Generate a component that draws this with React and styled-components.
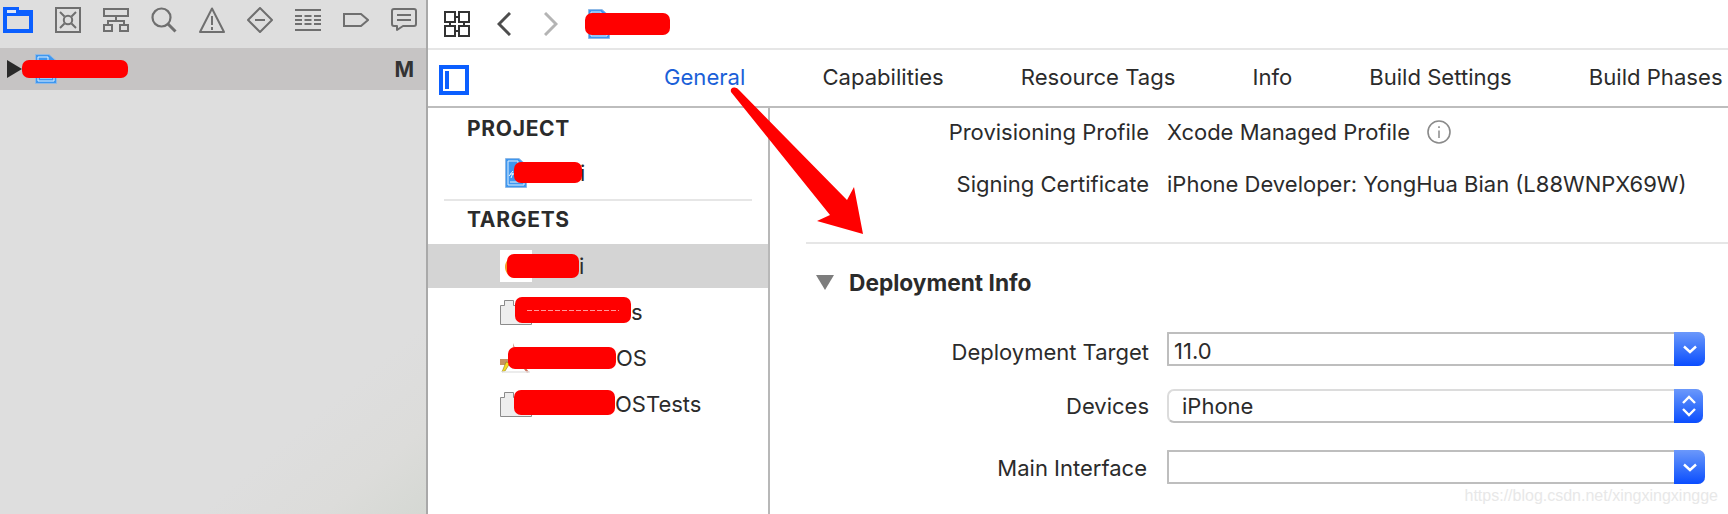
import React from 'react'
import styled, { createGlobalStyle } from 'styled-components'

const Global = createGlobalStyle`
  html, body { margin: 0; padding: 0; background: #fff; }
  body { font-family: Inter, "Liberation Sans", sans-serif; color: #2b2b2b; }
`

const Page = styled.div`
  position: relative;
  display: flex;
  width: 1728px;
  height: 514px;
  overflow: hidden;
  background: #fff;
`

const Navigator = styled.aside`
  flex: none;
  width: 426px;
  border-right: 2px solid #a9a9a9;
  background: linear-gradient(140deg, #dedede 78%, #dcdcda 90%, #d5d8d3 100%);
`

const NavTools = styled.div`
  display: flex;
  align-items: center;
  gap: 22px;
  height: 48px;
  padding: 0 0 0 3px;
  box-sizing: border-box;
  svg { flex: none; margin-top: -8px; }
`

const ProjectRow = styled.div`
  display: flex;
  align-items: center;
  height: 42px;
  padding: 0 12px 0 7px;
  background: #c6c4c4;
`

const Arrow = styled.span`
  width: 0;
  height: 0;
  border-style: solid;
  border-width: 9px 0 9px 15px;
  border-color: transparent transparent transparent #2a2a2a;
`

const ModBadge = styled.span`
  margin-left: auto;
  font-size: 21px;
  font-weight: 700;
  color: #333;
`

const Redact = styled.span`
  flex: none;
  display: block;
  position: relative;
  z-index: 1;
  width: ${p => p.$w}px;
  height: ${p => p.$h}px;
  margin-left: ${p => p.$ml}px;
  margin-top: ${p => p.$mt || 0}px;
  background: #ff0000;
  border-radius: 7px;
  ${p => p.$dash && `
    &::after {
      content: '';
      position: absolute;
      left: 12px;
      top: ${p.$dash}px;
      width: ${p.$w - 24}px;
      height: 1px;
      background: repeating-linear-gradient(90deg, #ff9c9c 0 5px, #ff0000 5px 7px);
    }
  `}
`

const Editor = styled.main`
  flex: 1;
  min-width: 0;
  display: flex;
  flex-direction: column;
`

const TopBar = styled.div`
  display: flex;
  align-items: center;
  height: 48px;
  padding-left: 16px;
  border-bottom: 2px solid #e6e6e6;
`

const NavButton = styled.span`
  display: flex;
  margin-left: ${p => p.$ml}px;
`

const TabBar = styled.div`
  display: flex;
  align-items: center;
  height: 56px;
  padding-left: 11px;
  border-bottom: 2px solid #bdbdbd;
`

const PaneToggle = styled.span`
  flex: none;
  box-sizing: border-box;
  width: 30px;
  height: 30px;
  padding: 2px 0 2px 2px;
  margin-top: 4px;
  border: 4px solid #0b5fff;
  &::before {
    content: '';
    display: block;
    width: 4px;
    height: 100%;
    background: #0b5fff;
  }
`

const Tabs = styled.nav`
  display: flex;
  gap: 77px;
  margin-left: 195px;
  margin-top: -2px;
`

const Tab = styled.span`
  font-size: 22.1px;
  line-height: 30px;
  white-space: nowrap;
  color: ${p => (p.$active ? '#1a5fd8' : '#2b2b2b')};
`

const Body = styled.div`
  flex: 1;
  display: flex;
  min-height: 0;
`

const Targets = styled.div`
  flex: none;
  width: 340px;
  border-right: 2px solid #b8b8b8;
  display: flex;
  flex-direction: column;
`

const GroupTitle = styled.div`
  height: 30px;
  margin-top: ${p => p.$mt}px;
  padding-left: 39px;
  font-size: 21px;
  line-height: 30px;
  font-weight: 700;
  letter-spacing: 0.7px;
  color: #2b2b2b;
`

const TargetRow = styled.div`
  display: flex;
  align-items: center;
  height: 44px;
  margin-top: ${p => p.$mt || 0}px;
  padding-left: 72px;
  font-size: 22px;
  background: ${p => (p.$selected ? '#d4d4d4' : 'transparent')};
`

const Sep = styled.div`
  height: 2px;
  margin: 4px 16px 0;
  background: #e6e6e6;
`

const IconBox = styled.span`
  flex: none;
  display: flex;
  align-items: center;
  width: 32px;
  height: 32px;
  background: ${p => (p.$white ? '#fff' : 'transparent')};
`

const Suffix = styled.span`
  margin-left: ${p => p.$ml || 0}px;
  white-space: nowrap;
`

const Settings = styled.section`
  flex: 1;
  min-width: 0;
  display: flex;
  flex-direction: column;
`

const Field = styled.div`
  display: flex;
  align-items: center;
  gap: 18px;
  height: ${p => p.$h || 34}px;
  margin-top: ${p => p.$mt || 0}px;
  font-size: 22px;
`

const Label = styled.span`
  flex: none;
  width: ${p => p.$w || 379}px;
  margin-right: ${p => (p.$w ? 379 - p.$w : 0)}px;
  padding-top: ${p => p.$drop || 0}px;
  text-align: right;
  white-space: nowrap;
`

const Value = styled.span`
  white-space: nowrap;
`

const InfoDot = styled.span`
  display: flex;
  margin-left: -1px;
`

const Divider = styled.div`
  height: 2px;
  margin: 34px 0 0 36px;
  background: #e6e6e6;
`

const SectionHead = styled.div`
  display: flex;
  align-items: center;
  height: 30px;
  margin-top: 23px;
  padding-left: 46px;
  font-size: 22.7px;
  font-weight: 700;
  color: #2b2b2b;
  &::before {
    content: '';
    margin-right: 15px;
    border-style: solid;
    border-width: 15px 9px 0 9px;
    border-color: #7d7d7d transparent transparent transparent;
  }
`

const Select = styled.div`
  display: flex;
  box-sizing: border-box;
  align-items: stretch;
  width: ${p => p.$w}px;
  height: 34px;
  background: #fff;
  border: 2px solid ${p => (p.$soft ? '#dcdcdc' : '#bebebe')};
  border-right: none;
  border-bottom-color: #bebebe;
  border-radius: ${p => (p.$soft ? '7px' : '1px')} 7px 7px ${p => (p.$soft ? '7px' : '1px')};
`

const SelectText = styled.span`
  flex: 1;
  padding-left: ${p => p.$pl}px;
  font-size: 22px;
  line-height: ${p => p.$lh || 30}px;
`

const SelectButton = styled.span`
  flex: none;
  display: flex;
  align-items: center;
  justify-content: center;
  width: ${p => p.$w}px;
  margin: -2px 0;
  border-radius: 0 7px 7px 0;
  background: linear-gradient(180deg, #6b98fb 0%, #3a74fb 50%, #0b4dff 100%);
`

const Watermark = styled.span`
  position: absolute;
  right: 10px;
  bottom: 9px;
  font-family: "Liberation Sans", sans-serif;
  font-size: 16px;
  color: #e8e8e8;
  white-space: nowrap;
`

const Overlay = styled.svg`
  position: absolute;
  left: 0;
  top: 0;
  pointer-events: none;
`

const gray = '#6f6f6f'

const FolderIcon = () => (
  <svg width="30" height="26" viewBox="0 0 30 26" fill="none">
    <path d="M0 0H16V3H30V26H0Z" fill="#0b5fff" />
    <path d="M4 3H13V6H4Z" fill="#dfe6f5" />
    <path d="M4 9H26V22H4Z" fill="#dedede" />
  </svg>
)

const SymbolIcon = () => (
  <svg width="26" height="26" viewBox="0 0 26 26" fill="none" stroke={gray}>
    <rect x="1" y="1" width="24" height="24" strokeWidth="2" />
    <circle cx="13" cy="13" r="4.2" strokeWidth="2" />
    <path d="M5 5L9.5 9.5M21 5L16.5 9.5M5 21L9.5 16.5M21 21L16.5 16.5" strokeWidth="2" />
  </svg>
)

const HierarchyIcon = () => (
  <svg width="26" height="24" viewBox="0 0 26 24" fill="none" stroke={gray} strokeWidth="2">
    <rect x="1" y="1" width="24" height="7" />
    <path d="M13 8V13M5 17V13H21V17" />
    <rect x="1" y="17" width="8" height="6" />
    <rect x="17" y="17" width="8" height="6" />
  </svg>
)

const SearchIcon = () => (
  <svg width="26" height="26" viewBox="0 0 26 26" fill="none" stroke={gray}>
    <circle cx="10.5" cy="10.5" r="9" strokeWidth="2.2" />
    <path d="M17 17L24.5 24.5" strokeWidth="3" />
  </svg>
)

const WarnIcon = () => (
  <svg width="26" height="26" viewBox="0 0 26 26" fill="none" stroke={gray} strokeWidth="2">
    <path d="M13 1.5L25 25H1Z" strokeLinejoin="round" />
    <path d="M13 9V18M13 20V23" />
  </svg>
)

const TestIcon = () => (
  <svg width="26" height="26" viewBox="0 0 26 26" fill="none" stroke={gray} strokeWidth="2">
    <path d="M13 1L25 13L13 25L1 13Z" strokeLinejoin="round" />
    <path d="M8 13H18" />
  </svg>
)

const LinesIcon = () => (
  <svg width="26" height="22" viewBox="0 0 26 22" fill="none" stroke={gray} strokeWidth="2">
    <path d="M0 1H26M0 21H26" />
    <path d="M0 7H7M9.5 7H16.5M19 7H26M0 11H7M9.5 11H16.5M19 11H26M0 15H7M9.5 15H16.5M19 15H26" />
  </svg>
)

const TagIcon = () => (
  <svg width="26" height="14" viewBox="0 0 26 14" fill="none" stroke={gray} strokeWidth="2">
    <path d="M1 1H18L25 7L18 13H1Z" />
  </svg>
)

const CommentIcon = () => (
  <svg width="26" height="24" viewBox="0 0 26 24" fill="none" stroke={gray} strokeWidth="2">
    <path d="M3 1H23Q25 1 25 3V16Q25 18 23 18H12L6 22V18H3Q1 18 1 16V3Q1 1 3 1Z" strokeLinejoin="round" />
    <path d="M6 7H20M6 12H20" />
  </svg>
)

const BlueprintIcon = () => (
  <svg width="22" height="30" viewBox="0 0 22 30" fill="none">
    <path d="M0.5 0.5H14L21.5 7V29.5H0.5Z" fill="#3f97ef" stroke="#8fb9e6" />
    <path d="M3 3H13V8H19V27H3Z" stroke="#dff0ff" strokeWidth="1" />
    <path d="M4 18L8 13M5 16H9M6 20L8 15" stroke="#eaf5ff" strokeWidth="1" />
    <path d="M5 24H17" stroke="#eaf5ff" strokeWidth="1" />
  </svg>
)

const GridIcon = () => (
  <svg width="26" height="26" viewBox="0 0 26 26" fill="none" stroke="#333" strokeWidth="2">
    <rect x="1" y="1" width="10" height="10" />
    <rect x="15" y="1" width="10" height="10" />
    <rect x="1" y="15" width="10" height="10" />
    <rect x="15" y="15" width="10" height="10" />
    <path d="M11 6H15M6 11V15M20 11V15M11 20H15" />
  </svg>
)

const Chevron = ({ left, color }) => (
  <svg width="14" height="24" viewBox="0 0 14 24" fill="none" stroke={color} strokeWidth="3">
    <path d={left ? 'M13 1L2 12L13 23' : 'M1 1L12 12L1 23'} />
  </svg>
)

const InfoIcon = () => (
  <svg width="24" height="24" viewBox="0 0 24 24" fill="none" stroke="#8a8a8a">
    <circle cx="12" cy="12" r="11" strokeWidth="1.6" />
    <path d="M12 10.5V18" strokeWidth="1.5" />
    <path d="M12 6.2V8" strokeWidth="1.6" />
  </svg>
)

const ExtensionIcon = () => (
  <svg width="32" height="26" viewBox="0 0 32 26" fill="none">
    <path d="M0.5 25.5V6.5H4.5V1.5H13.5V6.5H31.5V25.5Z" fill="#eeeeee" stroke="#8b8b8b" />
  </svg>
)

const AppIcon = () => (
  <svg width="32" height="30" viewBox="0 0 32 30" fill="none">
    <path d="M0 16H10V22H0Z" fill="#c79462" />
    <path d="M2 29L6 19L10 20L5 28Z" fill="#f5dd23" stroke="#8a7a20" strokeWidth="0.6" />
    <path d="M13 0L16 8H14Z" fill="#b5705c" />
    <path d="M25 24L29 29L27 30L24 26Z" fill="#c9705c" />
    <path d="M2 29H30" stroke="#e6e6e6" strokeWidth="1.5" />
  </svg>
)

const OrangeBadge = () => (
  <svg width="32" height="32" viewBox="0 0 32 32" fill="none">
    <circle cx="16" cy="17" r="11" fill="#f59a23" />
  </svg>
)

const DownMark = () => (
  <svg width="14" height="9" viewBox="0 0 14 9" fill="none" stroke="#fff" strokeWidth="2.4">
    <path d="M1 1.5L7 7L13 1.5" />
  </svg>
)

const StepMark = () => (
  <svg width="14" height="22" viewBox="0 0 14 22" fill="none" stroke="#fff" strokeWidth="2.4">
    <path d="M1 8L7 2L13 8M1 14L7 20L13 14" />
  </svg>
)

function App() {
  return (
    <Page>
      <Global />
      <Navigator>
        <NavTools>
          <FolderIcon />
          <SymbolIcon />
          <HierarchyIcon />
          <SearchIcon />
          <WarnIcon />
          <TestIcon />
          <LinesIcon />
          <TagIcon />
          <CommentIcon />
        </NavTools>
        <ProjectRow>
          <Arrow />
          <NavButton $ml={13}>
            <BlueprintIcon />
          </NavButton>
          <Redact $w={106} $h={18} $ml={-35} />
          <ModBadge>M</ModBadge>
        </ProjectRow>
      </Navigator>

      <Editor>
        <TopBar>
          <GridIcon />
          <NavButton $ml={27}>
            <Chevron left color="#4d4d4d" />
          </NavButton>
          <NavButton $ml={33}>
            <Chevron color="#b4b4b4" />
          </NavButton>
          <NavButton $ml={30}>
            <BlueprintIcon />
          </NavButton>
          <Redact $w={85} $h={22} $ml={-25} />
        </TopBar>

        <TabBar>
          <PaneToggle />
          <Tabs>
            <Tab $active>General</Tab>
            <Tab>Capabilities</Tab>
            <Tab>Resource Tags</Tab>
            <Tab>Info</Tab>
            <Tab>Build Settings</Tab>
            <Tab>Build Phases</Tab>
          </Tabs>
        </TabBar>

        <Body>
          <Targets>
            <GroupTitle $mt={6}>PROJECT</GroupTitle>
            <TargetRow $mt={7}>
              <IconBox>
                <NavButton $ml={5}>
                  <BlueprintIcon />
                </NavButton>
              </IconBox>
              <Redact $w={68} $h={21} $ml={-18} $mt={-2} />
              <Suffix $ml={-2}>i</Suffix>
            </TargetRow>
            <Sep />
            <GroupTitle $mt={4}>TARGETS</GroupTitle>
            <TargetRow $selected $mt={9}>
              <IconBox $white>
                <OrangeBadge />
              </IconBox>
              <Redact $w={72} $h={24} $ml={-25} />
              <Suffix>i</Suffix>
            </TargetRow>
            <TargetRow $mt={2}>
              <IconBox>
                <ExtensionIcon />
              </IconBox>
              <Redact $w={116} $h={26} $ml={-17} $mt={-5} $dash={13} />
              <Suffix>s</Suffix>
            </TargetRow>
            <TargetRow $mt={2}>
              <IconBox>
                <AppIcon />
              </IconBox>
              <Redact $w={108} $h={22} $ml={-24} />
              <Suffix>OS</Suffix>
            </TargetRow>
            <TargetRow $mt={2}>
              <IconBox>
                <ExtensionIcon />
              </IconBox>
              <Redact $w={101} $h={25} $ml={-18} $mt={-3} />
              <Suffix>OSTests</Suffix>
            </TargetRow>
          </Targets>

          <Settings>
            <Field $h={48}>
              <Label>Provisioning Profile</Label>
              <Value>Xcode Managed Profile</Value>
              <InfoDot>
                <InfoIcon />
              </InfoDot>
            </Field>
            <Field $h={48} $mt={4}>
              <Label>Signing Certificate</Label>
              <Value>iPhone Developer: YongHua Bian (L88WNPX69W)</Value>
            </Field>
            <Divider />
            <SectionHead>Deployment Info</SectionHead>
            <Field $mt={35}>
              <Label $drop={6}>Deployment Target</Label>
              <Select $w={538}>
                <SelectText $pl={5} $lh={34}>11.0</SelectText>
                <SelectButton $w={31}>
                  <DownMark />
                </SelectButton>
              </Select>
            </Field>
            <Field $mt={23}>
              <Label>Devices</Label>
              <Select $w={536} $soft>
                <SelectText $pl={13}>iPhone</SelectText>
                <SelectButton $w={29}>
                  <StepMark />
                </SelectButton>
              </Select>
            </Field>
            <Field $mt={27}>
              <Label $w={377} $drop={2}>Main Interface</Label>
              <Select $w={538}>
                <SelectText $pl={5} />
                <SelectButton $w={31}>
                  <DownMark />
                </SelectButton>
              </Select>
            </Field>
          </Settings>
        </Body>
      </Editor>

      <Overlay width="1728" height="514" viewBox="0 0 1728 514">
        <path
          d="M731 92Q730 88 734 87.5Q737 87 739 90L847 200L854 187L863 234L817 221L830 215Z"
          fill="#ff0000"
        />
      </Overlay>
      <Watermark>https://blog.csdn.net/xingxingxingge</Watermark>
    </Page>
  )
}

export default App
